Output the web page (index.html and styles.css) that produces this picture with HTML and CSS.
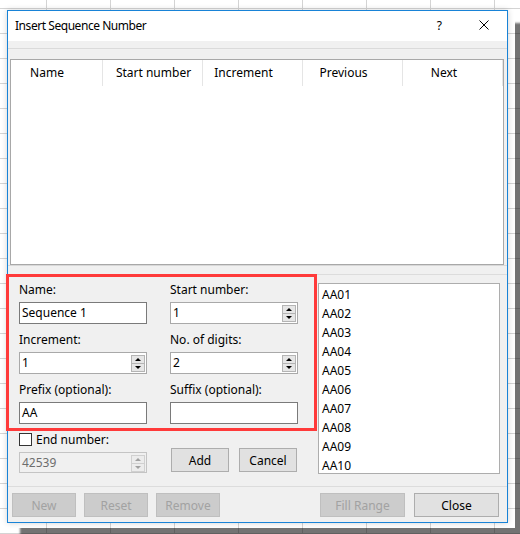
FILE: index.html
```html
<!DOCTYPE html>
<html lang="en">
<head>
  <meta charset="UTF-8">
  <title>Insert Sequence Number</title>
  <link rel="stylesheet" href="styles.css">
</head>
<body>
  <div class="screen">
    <div class="dialog">

      <!-- Title bar -->
      <div class="titlebar">
        <span class="title">Insert Sequence Number</span>
        <span class="help">?</span>
        <svg class="close-x" width="10" height="10" viewBox="0 0 10 10">
          <path d="M0.5 0.5 L9.5 9.5 M9.5 0.5 L0.5 9.5" stroke="#000" stroke-width="1" fill="none"/>
        </svg>
      </div>
      <div class="strip"></div>

      <!-- Sequence list -->
      <div class="upper">
        <div class="listview">
          <div class="lv-header">
            <div class="col col-name">Name</div>
            <div class="col col-start">Start number</div>
            <div class="col col-inc">Increment</div>
            <div class="col col-prev">Previous</div>
            <div class="col col-next">Next</div>
          </div>
        </div>
      </div>

      <!-- Edit area -->
      <div class="lower">
        <div class="left">
          <div class="fields">
            <div class="field">
              <label>Name:</label>
              <div class="textbox">Sequence 1</div>
            </div>
            <div class="field">
              <label>Start number:</label>
              <div class="spinbox">
                <span class="value">1</span>
                <span class="arrows"><span class="up"></span><span class="down"></span></span>
              </div>
            </div>
            <div class="field">
              <label>Increment:</label>
              <div class="spinbox">
                <span class="value">1</span>
                <span class="arrows"><span class="up"></span><span class="down"></span></span>
              </div>
            </div>
            <div class="field">
              <label>No. of digits:</label>
              <div class="spinbox">
                <span class="value">2</span>
                <span class="arrows"><span class="up"></span><span class="down"></span></span>
              </div>
            </div>
            <div class="field">
              <label>Prefix (optional):</label>
              <div class="textbox">AA</div>
            </div>
            <div class="field">
              <label>Suffix (optional):</label>
              <div class="textbox"></div>
            </div>
          </div>

          <div class="extra">
            <div class="end-col">
              <div class="check-row">
                <span class="checkbox"></span>
                <span>End number:</span>
              </div>
              <div class="spinbox disabled">
                <span class="value">42539</span>
                <span class="arrows"><span class="up"></span><span class="down"></span></span>
              </div>
            </div>
            <div class="action-btns">
              <button class="btn small">Add</button>
              <button class="btn small">Cancel</button>
            </div>
          </div>
        </div>

        <div class="preview">
          <div>AA01</div>
          <div>AA02</div>
          <div>AA03</div>
          <div>AA04</div>
          <div>AA05</div>
          <div>AA06</div>
          <div>AA07</div>
          <div>AA08</div>
          <div>AA09</div>
          <div>AA10</div>
        </div>
      </div>

      <!-- Footer buttons -->
      <div class="footer">
        <div class="btn-group">
          <button class="btn mid" disabled>New</button>
          <button class="btn mid" disabled>Reset</button>
          <button class="btn mid" disabled>Remove</button>
        </div>
        <div class="btn-group right">
          <button class="btn wide" disabled>Fill Range</button>
          <button class="btn wide">Close</button>
        </div>
      </div>

    </div>
  </div>
</body>
</html>
```

FILE: styles.css
```css
/* Page: spreadsheet grid behind the dialog */
body {
  margin: 0;
  width: 520px;
  height: 534px;
  overflow: hidden;
  font-family: 'Noto Sans', sans-serif;
  font-size: 12px;
  color: #000;
  background-color: #ffffff;
  background-image:
    linear-gradient(to right, #d4d4d4 1px, transparent 1px),
    linear-gradient(to bottom, #d4d4d4 1px, transparent 1px);
  background-size: 64px 100%, 100% 25px;
  background-position: 46px 0, 0 8px;
}
.screen {
  margin: 10px 0 0 7px;
  width: 508px;
  height: 518px;
  box-shadow: 13px 13px 2px rgba(0, 0, 0, 0.55);
}

/* Dialog frame */
.dialog {
  box-sizing: border-box;
  width: 501px;
  height: 513px;
  border: 1px solid #1883d7;
  background-color: #f0f0f0;
  box-shadow: 0 0 6px rgba(0, 0, 0, 0.18);
  display: flex;
  flex-direction: column;
}
.titlebar {
  height: 30px;
  background-color: #ffffff;
  display: flex;
  align-items: flex-start;
  padding-top: 7px;
  box-sizing: border-box;
  line-height: 16px;
}
.title {
  flex: 1;
  padding-left: 7px;
  letter-spacing: -0.45px;
}
.help {
  margin-right: 37px;
}
.close-x {
  margin-top: 2px;
  margin-right: 18px;
}
.strip {
  margin-top: 7px;
  height: 1px;
  background-color: #dadada;
}

/* Sequence list view */
.upper {
  padding: 10px 3px 0 2px;
  border-bottom: 1px solid #d8d8d8;
}
.listview {
  height: 206px;
  box-sizing: border-box;
  border: 1px solid #a8a8a8;
  background-color: #ffffff;
}
.lv-header {
  display: flex;
  height: 26px;
}
.col {
  box-sizing: border-box;
  width: 100px;
  border-right: 1px solid #e5e5e5;
  line-height: 25px;
  text-align: center;
}
.col-name { width: 92px; padding-right: 19px; }
.col-start { padding-left: 2px; }
.col-inc { padding-right: 18px; }
.col-prev { padding-right: 18px; }
.col-next { padding-right: 17px; }

/* Edit area */
.lower {
  margin-top: 8px;
  border-top: 1px solid #dcdcdc;
  display: flex;
  align-items: flex-start;
}
.left {
  margin-left: -2px;
  width: 311px;
}
.fields {
  margin-top: -1px;
  box-sizing: border-box;
  width: 311px;
  border: 3px solid #ff3a3a;
  padding: 5px 15px 4px 10px;
  display: grid;
  grid-template-columns: 128px 128px;
  column-gap: 23px;
  row-gap: 8px;
}
.field label {
  display: block;
  line-height: 16px;
  margin-bottom: 4px;
}
.textbox,
.spinbox {
  box-sizing: border-box;
  height: 22px;
  background-color: #ffffff;
  line-height: 20px;
  padding-left: 2px;
}
.textbox {
  border: 1px solid #7a7a7a;
}
.spinbox {
  border: 1px solid #a9a9a9;
  display: flex;
}
.spinbox .value {
  flex: 1;
}
.arrows {
  display: flex;
  flex-direction: column;
  margin: 2px 1px 0 0;
}
.arrows span {
  box-sizing: border-box;
  width: 14px;
  height: 9px;
  border: 1px solid #b4b4b4;
  background-color: #e6e6e6;
  display: flex;
  align-items: center;
  justify-content: center;
}
.arrows .down {
  margin-top: -1px;
}
.arrows .up::after {
  content: '';
  border-left: 3px solid transparent;
  border-right: 3px solid transparent;
  border-bottom: 3px solid #000;
}
.arrows .down::after {
  content: '';
  border-left: 3px solid transparent;
  border-right: 3px solid transparent;
  border-top: 3px solid #000;
}
.spinbox.disabled {
  height: 21px;
  border-color: #c4c4c4;
  background-color: #f0f0f0;
  color: #6d6d6d;
  line-height: 19px;
}
.spinbox.disabled .arrows span {
  border-color: #d0d0d0;
  background-color: #ececec;
}
.spinbox.disabled .arrows .up::after { border-bottom-color: #a0a0a0; }
.spinbox.disabled .arrows .down::after { border-top-color: #a0a0a0; }

.extra {
  display: flex;
  padding-left: 13px;
  margin-top: 2px;
}
.end-col {
  width: 128px;
}
.check-row {
  display: flex;
  align-items: center;
  height: 13px;
  margin-bottom: 6px;
}
.checkbox {
  box-sizing: border-box;
  width: 13px;
  height: 13px;
  border: 1px solid #333333;
  background-color: #ffffff;
  margin-right: 4px;
}
.action-btns {
  margin-left: 24px;
  padding-top: 15px;
  display: flex;
  gap: 10px;
}

/* Preview of generated numbers */
.preview {
  margin: 8px 0 0 1px;
  box-sizing: border-box;
  width: 182px;
  height: 191px;
  border: 1px solid #adadad;
  background-color: #ffffff;
  padding: 1px 0 0 3px;
  line-height: 19px;
  overflow: hidden;
}

/* Buttons */
.btn {
  box-sizing: border-box;
  height: 24px;
  border: 1px solid #adadad;
  background-color: #e1e1e1;
  font-family: 'Noto Sans', sans-serif;
  font-size: 12px;
  color: #000;
  padding: 0;
}
.btn:disabled {
  background-color: #cccccc;
  border-color: #bfbfbf;
  color: #a2a2a2;
}
.btn.small { width: 58px; }
.btn.mid { width: 64px; }
.btn.wide { width: 85px; }

.footer {
  margin-top: auto;
  border-top: 1px solid #dcdcdc;
  padding: 6px 8px 5px 4px;
  display: flex;
  justify-content: space-between;
}
.btn-group {
  display: flex;
  gap: 8px;
}
.btn-group.right {
  gap: 9px;
}
```
